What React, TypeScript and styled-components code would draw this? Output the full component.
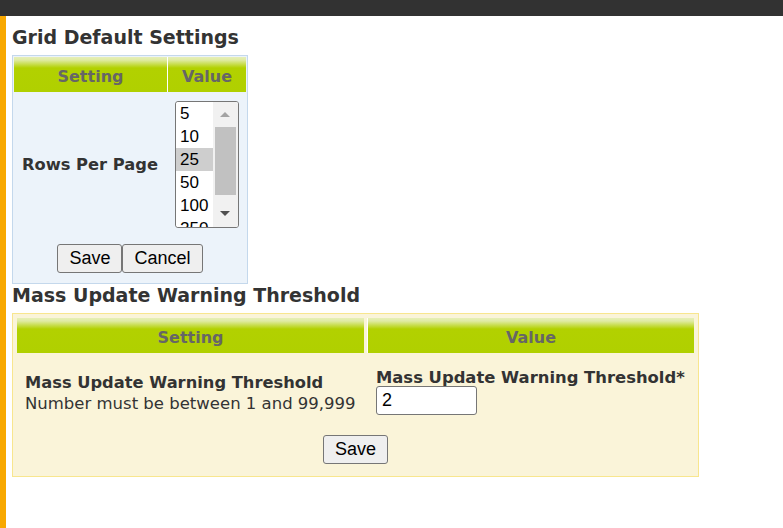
import * as React from "react";
import styled, { createGlobalStyle } from "styled-components";

const GlobalStyle = createGlobalStyle`
  html, body {
    margin: 0;
    padding: 0;
    background: #fff;
  }
  body {
    font-family: "DejaVu Sans", Verdana, sans-serif;
    color: #333;
  }
`;

const TopBar = styled.div`
  height: 16px;
  background: #323232;
`;

const Main = styled.div`
  display: flex;
  min-height: calc(100vh - 16px);
`;

const Stripe = styled.div`
  width: 6px;
  flex: none;
  background: #f8a800;
`;

const Content = styled.div`
  flex: 1;
  display: flex;
  flex-direction: column;
  align-items: flex-start;
  padding: 10px 0 0 6px;
`;

const Heading = styled.h2`
  margin: 0 0 6px;
  font-size: 19px;
  line-height: 23px;
  font-weight: bold;
  color: #333;
`;

const SettingsTable = styled.table<{ $tone: "blue" | "yellow"; $spacing: number }>`
  border-collapse: separate;
  border-spacing: ${(p) => p.$spacing}px;
  background: ${(p) => (p.$tone === "blue" ? "#ecf3fa" : "#faf4d9")};
  border: 1px solid ${(p) => (p.$tone === "blue" ? "#c4d8ec" : "#f8e68e")};
`;

const HeadCell = styled.th<{ $width?: number }>`
  height: 35px;
  padding: 4px 8px 0;
  box-sizing: border-box;
  ${(p) => (p.$width ? `width: ${p.$width}px;` : "")}
  background: linear-gradient(#e6efb8 0, #e0eba4 3px, #b2d100 11px, #b0d000 100%);
  color: #666;
  font-size: 16px;
  font-weight: bold;
  text-align: center;
  vertical-align: middle;

  & + & {
    box-shadow: -1px 0 0 #fff;
  }
`;

const Cell = styled.td<{ $pad: string }>`
  padding: ${(p) => p.$pad};
  vertical-align: middle;
  font-size: 16.5px;
  color: #333;
`;

const Label = styled.div`
  font-weight: bold;
  font-size: 16.3px;
  line-height: 21px;
  white-space: nowrap;
`;

const Hint = styled.div`
  line-height: 21px;
  white-space: nowrap;
`;

const FieldLabel = styled.label`
  display: block;
  font-weight: bold;
  font-size: 16.4px;
  line-height: 21px;
  margin-bottom: -2px;
  white-space: nowrap;
`;

const ButtonRow = styled.div`
  display: flex;
  justify-content: center;
`;

const Button = styled.button`
  font-family: "Liberation Sans", Arial, sans-serif;
  font-size: 18px;
  line-height: 21px;
  height: 29px;
  padding: 3px 11px;
  margin: 0;
  color: #000;
  background: #efefef;
  border: 1px solid #767676;
  border-radius: 3px;
`;

// the listbox: a native select plus a drawn classic scrollbar beside it
const ListFrame = styled.div`
  display: flex;
  box-sizing: border-box;
  width: 64px;
  height: 127px;
  border: 1px solid #767676;
  border-radius: 3px;
  overflow: hidden;
  background: #fff;
`;

const ListBox = styled.select`
  display: block;
  flex: 1;
  min-width: 0;
  height: 100%;
  margin: 0;
  padding: 0;
  font-family: "Liberation Sans", Arial, sans-serif;
  font-size: 17px;
  color: #000;
  background: #fff;
  border: none;
  outline: none;
  overflow: hidden;

  option {
    padding: 1.5px 4px 1.25px;
  }
  option:checked {
    background: #cecece;
    color: #000;
  }
`;

const ScrollBar = styled.div`
  flex: none;
  width: 25px;
  display: flex;
  flex-direction: column;
  background: #f1f1f1;
`;

const ScrollButton = styled.div<{ $down?: boolean }>`
  flex: none;
  height: 23px;
  display: flex;
  justify-content: center;
  align-items: ${(p) => (p.$down ? "flex-start" : "center")};
  padding-top: ${(p) => (p.$down ? "7px" : "1px")};
  box-sizing: border-box;
`;

const Arrow = styled.span<{ $down?: boolean }>`
  width: 0;
  height: 0;
  border-left: 5px solid transparent;
  border-right: 5px solid transparent;
  ${(p) =>
    p.$down
      ? "border-top: 5px solid #505050;"
      : "border-bottom: 5px solid #a3a3a3;"}
`;

const Track = styled.div`
  flex: 1;
  padding: 2px;
`;

const Thumb = styled.div`
  height: 68px;
  background: #c1c1c1;
`;

const NumberInput = styled.input`
  display: block;
  box-sizing: border-box;
  width: 101px;
  height: 29px;
  margin: 0;
  padding: 2px 5px;
  font-family: "Liberation Sans", Arial, sans-serif;
  font-size: 18px;
  color: #000;
  background: #fff;
  border: 1px solid #767676;
  border-radius: 3px;
`;

const rowOptions = [5, 10, 25, 50, 100, 250];

export default function App() {
  const [rows, setRows] = React.useState("25");
  const [threshold, setThreshold] = React.useState("2");

  return (
    <>
      <GlobalStyle />
      <TopBar />
      <Main>
        <Stripe />
        <Content>
          <Heading>Grid Default Settings</Heading>
          <SettingsTable $tone="blue" $spacing={1}>
            <thead>
              <tr>
                <HeadCell>Setting</HeadCell>
                <HeadCell>Value</HeadCell>
              </tr>
            </thead>
            <tbody>
              <tr>
                <Cell $pad="8px 9px 8px 8px">
                  <Label>Rows Per Page</Label>
                </Cell>
                <Cell $pad="8px 7px">
                  <ListFrame>
                    <ListBox
                      size={6}
                      value={rows}
                      onChange={(e) => setRows(e.target.value)}
                    >
                      {rowOptions.map((n) => (
                        <option key={n} value={String(n)}>
                          {n}
                        </option>
                      ))}
                    </ListBox>
                    <ScrollBar aria-hidden="true">
                      <ScrollButton>
                        <Arrow />
                      </ScrollButton>
                      <Track>
                        <Thumb />
                      </Track>
                      <ScrollButton $down>
                        <Arrow $down />
                      </ScrollButton>
                    </ScrollBar>
                  </ListFrame>
                </Cell>
              </tr>
              <tr>
                <Cell colSpan={2} $pad="7px 8px 9px">
                  <ButtonRow>
                    <Button>Save</Button>
                    <Button>Cancel</Button>
                  </ButtonRow>
                </Cell>
              </tr>
            </tbody>
          </SettingsTable>

          <Heading>Mass Update Warning Threshold</Heading>
          <SettingsTable $tone="yellow" $spacing={4}>
            <thead>
              <tr>
                <HeadCell $width={347}>Setting</HeadCell>
                <HeadCell $width={326}>Value</HeadCell>
              </tr>
            </thead>
            <tbody>
              <tr>
                <Cell $pad="14px 8px 9px">
                  <Label>Mass Update Warning Threshold</Label>
                  <Hint>Number must be between 1 and 99,999</Hint>
                </Cell>
                <Cell $pad="10px 8px 9px">
                  <FieldLabel htmlFor="threshold">
                    Mass Update Warning Threshold*
                  </FieldLabel>
                  <NumberInput
                    id="threshold"
                    type="text"
                    value={threshold}
                    onChange={(e) => setThreshold(e.target.value)}
                  />
                </Cell>
              </tr>
              <tr>
                <Cell colSpan={2} $pad="7px 8px 8px">
                  <ButtonRow>
                    <Button>Save</Button>
                  </ButtonRow>
                </Cell>
              </tr>
            </tbody>
          </SettingsTable>
        </Content>
      </Main>
    </>
  );
}
